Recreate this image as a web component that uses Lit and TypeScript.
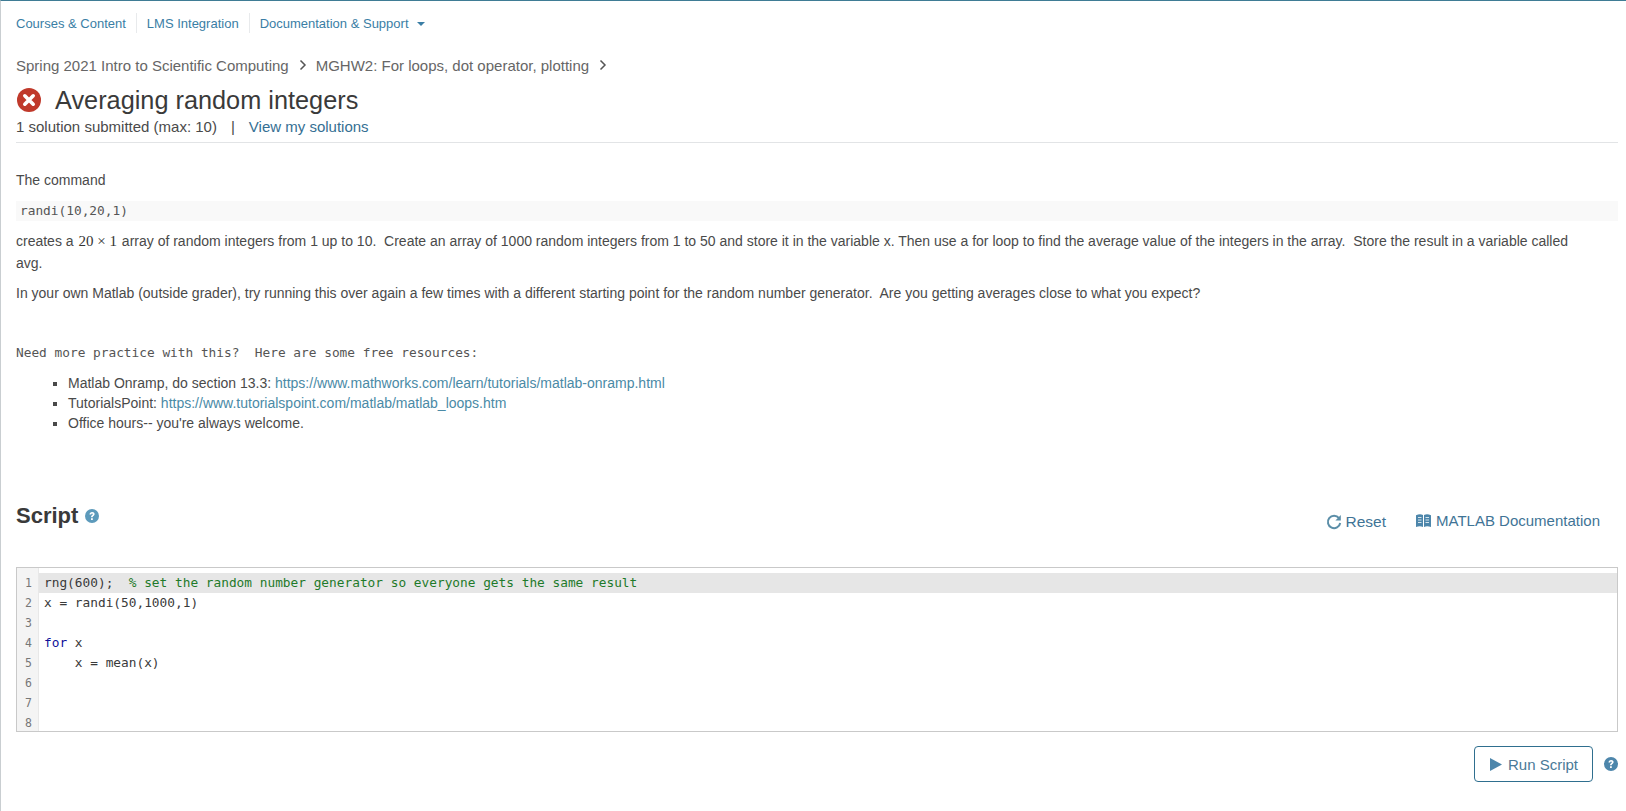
import { LitElement, html, css } from "lit";
import { customElement } from "lit/decorators.js";

const helpIcon = (size: number, cls: string) => html`<svg class=${cls} width=${size} height=${size} viewBox="0 0 16 16" aria-hidden="true">
  <circle cx="8" cy="8" r="8" fill="currentColor"></circle>
  <path d="M5.1 6.2c.1-1.7 1.3-2.8 3-2.8 1.7 0 2.9 1 2.9 2.4 0 1-.5 1.6-1.3 2.1-.7.5-.8.7-.8 1.3v.2H6.9v-.4c0-1 .4-1.5 1.1-2 .6-.4.9-.7.9-1.1 0-.5-.4-.7-.8-.7-.6 0-1 .4-1 1z" fill="#fff"></path>
  <rect x="6.9" y="10.5" width="2" height="2.1" fill="#fff"></rect>
</svg>`;

const chevron = html`<svg class="chev" width="8" height="12" viewBox="0 0 8 12" aria-hidden="true"><path d="M1.5 1.5 6 6l-4.5 4.5" fill="none" stroke="#555" stroke-width="1.5"></path></svg>`;

const codeLines = [
  html`rng(600);  <span class="cm">% set the random number generator so everyone gets the same result</span>`,
  html`x = randi(50,1000,1)`,
  html``,
  html`<span class="kw">for</span> x`,
  html`    x = mean(x)`,
  html``,
  html``,
  html``,
];

@customElement("app-root")
export class AppRoot extends LitElement {
  static styles = css`
    :host {
      display: block;
      box-sizing: border-box;
      height: 811px;
      overflow: hidden;
      background: #fff;
      border-top: 1px solid #3f7c95;
      border-left: 1px solid #c9ced1;
      padding: 0 8px 0 15px;
      font-family: "Liberation Sans", Arial, sans-serif;
      font-size: 14px;
      color: #4a4a4a;
    }
    a { text-decoration: none; color: inherit; }
    .nav {
      display: flex;
      align-items: center;
      height: 20px;
      margin-top: 12px;
      font-size: 13px;
      color: #3a7ea5;
    }
    .nav a { display: flex; align-items: center; height: 100%; }
    .nav a + a { border-left: 1px solid #e8eaec; margin-left: 10px; padding-left: 10px; }
    .caret {
      width: 0; height: 0; margin-left: 8px; margin-top: 2px;
      border-left: 4px solid transparent; border-right: 4px solid transparent;
      border-top: 4px solid #3a7ea5;
    }
    .crumbs {
      display: flex;
      align-items: center;
      height: 20px;
      margin-top: 22px;
      font-size: 15px;
      color: #666;
    }
    .chev { margin: 0 9px 0 10px; }
    .title {
      display: flex;
      align-items: center;
      height: 30px;
      margin-top: 10px;
      font-size: 25.3px;
      color: #3a3a3a;
    }
    .title svg { margin: 0 14px 0 1px; flex: none; }
    .title h1 { font: inherit; margin: 0; }
    .sub {
      display: flex;
      align-items: center;
      height: 20px;
      margin-top: 1px;
      padding-bottom: 6px;
      border-bottom: 1px solid #e2e4e6;
      font-size: 15px;
      box-sizing: content-box;
    }
    .sub .sep { margin: 0 14px; }
    .sub a { color: #356f93; }
    .prob { margin-top: 27px; line-height: 20px; }
    .prob p { margin: 0; }
    .snippet {
      margin: 11px 0 9px;
      height: 20px;
      padding-left: 4px;
      background: #f9f9f9;
      font: 12.8px/20px "DejaVu Sans Mono", monospace;
      color: #555;
    }
    .prob .p1 { line-height: 22px; }
    .math { font-family: "Liberation Serif", serif; font-size: 15px; color: #333; padding: 0 1px; }
    .prob .p2 { margin-top: 9px; }
    .prob .pre {
      margin-top: 40px;
      font: 12.8px/20px "DejaVu Sans Mono", monospace;
      white-space: pre;
      color: #555;
    }
    ul { margin: 10px 0 0; padding: 0 0 0 52px; list-style: square; }
    li a { color: #4a8aa6; }
    .head {
      display: flex;
      justify-content: space-between;
      align-items: flex-start;
      margin-top: 68px;
      height: 66px;
    }
    .script {
      display: flex;
      align-items: center;
      gap: 7px;
      font-size: 22px;
      font-weight: bold;
      color: #3a3a3a;
      line-height: 30px;
    }
    .help-a { color: #5c9abb; }
    .tools {
      display: flex;
      align-items: flex-start;
      margin-top: 11px;
      font-size: 15px;
      color: #3f7496;
      padding-right: 18px;
    }
    .tools a { display: flex; align-items: center; }
    .tools .reset { gap: 4px; margin-right: 30px; margin-top: 1px; font-size: 15.5px; }
    .tools .doc { gap: 5px; }
    .editor {
      display: grid;
      grid-template-columns: 22px 1fr;
      height: 165px;
      box-sizing: border-box;
      border: 1px solid #c9c9c9;
      font: 12.8px/20px "DejaVu Sans Mono", monospace;
      color: #3a3a3a;
      overflow: hidden;
    }
    .gutter {
      background: #f4f4f4;
      border-right: 1px solid #e8e8e8;
      padding-top: 5px;
      color: #777;
      text-align: right;
      font-size: 11.5px;
    }
    .gutter div { height: 20px; padding-right: 6px; }
    .lines { padding-top: 5px; }
    .line { height: 20px; padding-left: 5px; white-space: pre; }
    .line.active { background: #e6e6e6; }
    .cm { color: #1f7a2a; }
    .kw { color: #10109a; }
    .actions {
      display: flex;
      justify-content: flex-end;
      align-items: center;
      gap: 11px;
      margin-top: 14px;
    }
    .run {
      display: flex;
      align-items: center;
      justify-content: center;
      gap: 6px;
      width: 119px;
      height: 36px;
      box-sizing: border-box;
      border: 1px solid #2f6f8f;
      border-radius: 4px;
      background: #fff;
      font: 15px "Liberation Sans", Arial, sans-serif;
      color: #4a7a98;
      padding: 0;
    }
    .help-b { color: #4d86ab; }
  `;

  render() {
    return html`
      <nav class="nav">
        <a>Courses &amp; Content</a>
        <a>LMS Integration</a>
        <a>Documentation &amp; Support<span class="caret"></span></a>
      </nav>
      <div class="crumbs">
        <a>Spring 2021 Intro to Scientific Computing</a>${chevron}
        <a>MGHW2: For loops, dot operator, plotting</a>${chevron}
      </div>
      <div class="title">
        <svg width="24" height="24" viewBox="0 0 24 24" aria-hidden="true">
          <circle cx="12" cy="12" r="12" fill="#c0392b"></circle>
          <path d="M7.8 7.8l8.4 8.4M16.2 7.8l-8.4 8.4" stroke="#fff" stroke-width="3.6" stroke-linecap="round"></path>
        </svg>
        <h1>Averaging random integers</h1>
      </div>
      <div class="sub">
        <span>1 solution submitted (max: 10)</span><span class="sep">|</span><a>View my solutions</a>
      </div>
      <section class="prob">
        <p>The command</p>
        <div class="snippet">randi(10,20,1)</div>
        <p class="p1">creates a <span class="math">20 × 1</span> array of random integers from 1 up to 10.&nbsp; Create an array of 1000 random integers from 1 to 50 and store it in the variable x. Then use a for loop to find the average value of the integers in the array.&nbsp; Store the result in a variable called<br>avg.</p>
        <p class="p2">In your own Matlab (outside grader), try running this over again a few times with a different starting point for the random number generator.&nbsp; Are you getting averages close to what you expect?</p>
        <p class="pre">Need more practice with this?  Here are some free resources:</p>
        <ul>
          <li>Matlab Onramp, do section 13.3: <a>https://www.mathworks.com/learn/tutorials/matlab-onramp.html</a></li>
          <li>TutorialsPoint: <a>https://www.tutorialspoint.com/matlab/matlab_loops.htm</a></li>
          <li>Office hours-- you're always welcome.</li>
        </ul>
      </section>
      <div class="head">
        <div class="script">Script ${helpIcon(14, "help-a")}</div>
        <div class="tools">
          <a class="reset">
            <svg width="16" height="16" viewBox="0 0 16 16" aria-hidden="true"><path d="M13 4.2A6.2 6.2 0 1 0 14.2 9" fill="none" stroke="#5b8ea8" stroke-width="2"></path><path d="M14.8 1v5.4H9.4z" fill="#5b8ea8"></path></svg>
            Reset
          </a>
          <a class="doc">
            <svg width="15" height="13" viewBox="0 0 15 13" aria-hidden="true">
              <path d="M0 1.2Q4 -.4 7 1V13Q4 11.6 0 13zM15 1.2Q11 -.4 8 1V13Q11 11.6 15 13z" fill="#4d86ab"></path>
              <path d="M2 3.5h3.5M2 6h3.5M2 8.5h3.5M9.500 3.5H13M9.500 6H13M9.500 8.5H13" stroke="#d5e4ec" stroke-width="1"></path>
            </svg>
            MATLAB Documentation
          </a>
        </div>
      </div>
      <div class="editor">
        <div class="gutter">${codeLines.map((_, i) => html`<div>${i + 1}</div>`)}</div>
        <div class="lines">${codeLines.map((l, i) => html`<div class="line ${i === 0 ? "active" : ""}">${l}</div>`)}</div>
      </div>
      <div class="actions">
        <button class="run">
          <svg width="13" height="13" viewBox="0 0 13 13" aria-hidden="true"><path d="M1 0 13 6.5 1 13z" fill="#4d86ab"></path></svg>
          Run Script
        </button>
        ${helpIcon(14, "help-b")}
      </div>
    `;
  }
}
